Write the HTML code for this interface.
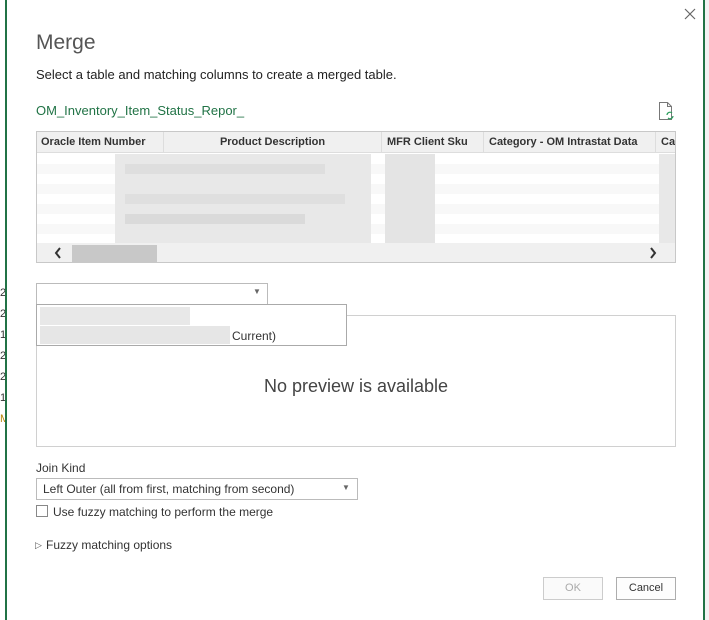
<!DOCTYPE html>
<html><head><style>
*{box-sizing:border-box;margin:0;padding:0}
body{width:709px;height:620px;position:relative;background:#fff;font-family:"Liberation Sans",sans-serif;overflow:hidden;color:#262626}
.a{position:absolute}
.blur{position:absolute;background:#e4e4e4}
</style></head><body>
<div class="a" style="left:5px;top:0;width:2px;height:620px;background:#217346"></div>
<div class="a" style="left:703px;top:0;width:2px;height:620px;background:#217346"></div>
<div class="a" style="left:705px;top:0;width:4px;height:620px;background:#f3f3f3"></div>
<div class="a" style="left:0;top:283px;font-size:11px;line-height:21px;color:#333;width:5px;overflow:hidden">2<br>2<br>1<br>2<br>2<br>1<br><span style="color:#b7860b">M</span></div>

<svg class="a" style="left:684px;top:8px" width="12" height="12" viewBox="0 0 12 12"><path d="M1 1L11 11M11 1L1 11" stroke="#666" stroke-width="1.2"/></svg>
<div class="a" style="left:36px;top:31px;font-size:21px;color:#555">Merge</div>
<div class="a" style="left:36px;top:67px;font-size:13px;color:#222">Select a table and matching columns to create a merged table.</div>
<div class="a" style="left:36px;top:103px;font-size:13px;color:#217346">OM_Inventory_Item_Status_Repor_</div>
<svg class="a" style="left:658px;top:101px" width="18" height="20" viewBox="0 0 18 20"><path d="M1.5 1.5h8l4 4v13h-12z M9.5 1.5v4h4" fill="none" stroke="#777"/><path d="M9 14a3 3 0 0 1 5-2M15 15a3 3 0 0 1-5 2" fill="none" stroke="#2a9d5c" stroke-width="1.2"/></svg>

<div class="a" style="left:36px;top:131px;width:640px;height:132px;border:1px solid #c8c8c8;overflow:hidden">
 <div class="a" style="left:0;top:0;width:640px;height:21px;background:#f0f0f0;border-bottom:1px solid #ddd;font-size:11px;font-weight:bold;line-height:21px;color:#333">
  <span class="a" style="left:4px">Oracle Item Number</span>
  <span class="a" style="left:126px;width:218px;text-align:center;border-left:1px solid #ddd">Product Description</span>
  <span class="a" style="left:344px;width:102px;padding-left:5px;border-left:1px solid #ddd">MFR Client Sku</span>
  <span class="a" style="left:446px;width:172px;padding-left:5px;border-left:1px solid #ddd">Category - OM Intrastat Data</span>
  <span class="a" style="left:618px;width:30px;padding-left:5px;border-left:1px solid #ddd">Cat</span>
 </div>
 <div class="a" style="left:0;top:32px;width:640px;height:10px;background:#f8f8f8"></div>
 <div class="a" style="left:0;top:52px;width:640px;height:10px;background:#f8f8f8"></div>
 <div class="a" style="left:0;top:72px;width:640px;height:10px;background:#f8f8f8"></div>
 <div class="a" style="left:0;top:92px;width:640px;height:10px;background:#f8f8f8"></div>
 <div class="blur" style="left:78px;top:22px;width:256px;height:90px;background:#e8e8e8"></div>
 <div class="blur" style="left:88px;top:32px;width:200px;height:10px;background:#dedede"></div>
 <div class="blur" style="left:88px;top:62px;width:220px;height:10px;background:#dfdfdf"></div>
 <div class="blur" style="left:88px;top:82px;width:180px;height:10px;background:#dadada"></div>
 <div class="blur" style="left:348px;top:22px;width:50px;height:90px;background:#e4e4e4"></div>
 <div class="blur" style="left:622px;top:22px;width:18px;height:90px;background:#e8e8e8"></div>
 <div class="a" style="left:0;top:111px;width:640px;height:20px;background:#f0f0f0"></div>
 <div class="a" style="left:35px;top:113px;width:85px;height:17px;background:#c8c8c8"></div>
 <svg class="a" style="left:17px;top:115px" width="8" height="12" viewBox="0 0 8 12"><path d="M6 1L2 6l4 5" fill="none" stroke="#333" stroke-width="2"/></svg>
 <svg class="a" style="left:612px;top:115px" width="8" height="12" viewBox="0 0 8 12"><path d="M2 1l4 5-4 5" fill="none" stroke="#333" stroke-width="2"/></svg>
</div>

<div class="a" style="left:36px;top:315px;width:640px;height:132px;border:1px solid #d0d0d0"></div>
<div class="a" style="left:36px;top:376px;width:640px;text-align:center;font-size:18px;color:#444">No preview is available</div>

<div class="a" style="left:36px;top:283px;width:232px;height:22px;border:1px solid #bbb;background:#fff"></div>
<div class="a" style="left:253px;top:287px;font-size:8px;color:#666">▼</div>
<div class="a" style="left:36px;top:304px;width:311px;height:42px;border:1px solid #aaa;background:#fff"></div>
<div class="blur" style="left:40px;top:307px;width:150px;height:18px;background:#e8e8e8"></div>
<div class="blur" style="left:40px;top:326px;width:190px;height:18px;background:#e6e6e6"></div>
<div class="a" style="left:232px;top:329px;font-size:12px;color:#333">Current)</div>

<div class="a" style="left:36px;top:461px;font-size:12px;color:#333">Join Kind</div>
<div class="a" style="left:36px;top:478px;width:322px;height:22px;border:1px solid #bbb;font-size:12px;line-height:20px;padding-left:6px;color:#333">Left Outer (all from first, matching from second)</div>
<div class="a" style="left:342px;top:483px;font-size:8px;color:#666">▼</div>
<div class="a" style="left:36px;top:505px;width:12px;height:12px;border:1px solid #888"></div>
<div class="a" style="left:53px;top:505px;font-size:12px;color:#333">Use fuzzy matching to perform the merge</div>
<div class="a" style="left:35px;top:540px;font-size:9px;color:#555">▷</div>
<div class="a" style="left:46px;top:538px;font-size:12px;color:#333">Fuzzy matching options</div>

<div class="a" style="left:543px;top:577px;width:60px;height:23px;border:1px solid #ccc;background:#fafafa;color:#aaa;font-size:11px;text-align:center;line-height:21px">OK</div>
<div class="a" style="left:616px;top:577px;width:60px;height:23px;border:1px solid #adadad;background:#fdfdfd;color:#333;font-size:11px;text-align:center;line-height:21px">Cancel</div>
</body></html>
